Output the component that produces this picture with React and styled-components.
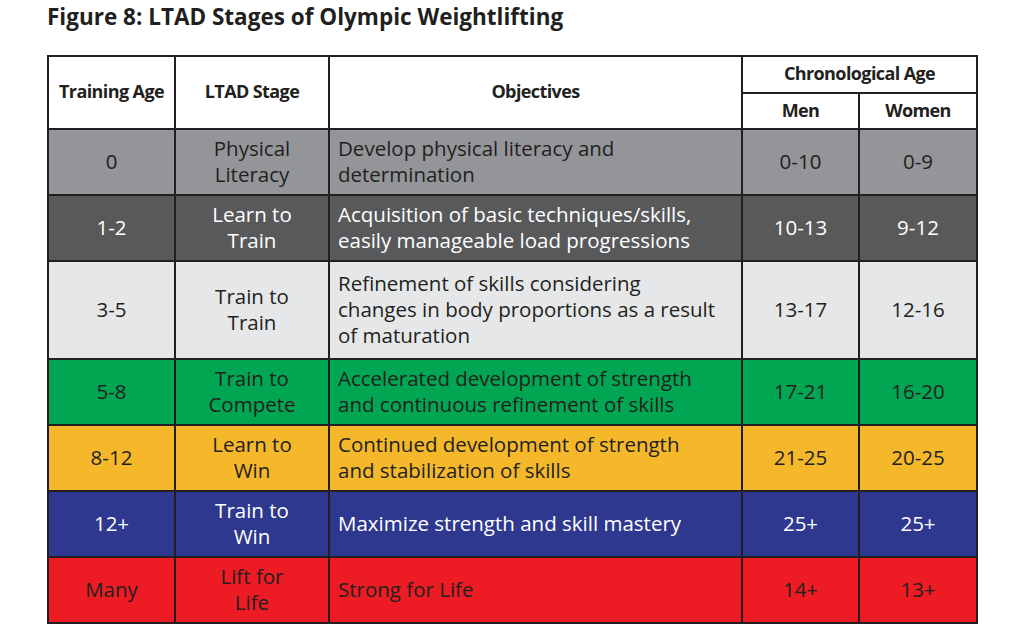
import React from "react";
import styled, { createGlobalStyle } from "styled-components";

const Global = createGlobalStyle`
  html, body { margin: 0; padding: 0; background: #ffffff; }
  body { font-family: "Open Sans", "Noto Sans", sans-serif; color: #231f20; }
`;

const Page = styled.div`
  width: 1024px;
  height: 626px;
  padding: 2px 0 0 47px;
  box-sizing: border-box;
  overflow: hidden;
`;

const Title = styled.h1`
  margin: 0 0 23px 0;
  font-family: "Open Sans", sans-serif;
  font-weight: 700;
  font-size: 22.5px;
  letter-spacing: 0;
  line-height: 30px;
  color: #231f20;
`;

const Grid = styled.div`
  display: grid;
  width: 931px;
  box-sizing: border-box;
  grid-template-columns: 125px 152px 411px 115px 116px;
  grid-template-rows: 35px 34px 64px 64px 96px 64px 64px 64px 64px;
  gap: 2px;
  padding: 2px;
  background: #231f20;
`;

const HeadCell = styled.div`
  background: #ffffff;
  display: flex;
  align-items: center;
  justify-content: center;
  padding-bottom: 3px;
  font-weight: 700;
  font-size: 18px;
  letter-spacing: -0.6px;
  color: #231f20;
  grid-row: ${(p) => (p.$tall ? "span 2" : "auto")};
  grid-column: ${(p) => (p.$wide ? "span 2" : "auto")};
`;

const Cell = styled.div`
  background: ${(p) => p.$bg};
  color: ${(p) => p.$fg};
  display: flex;
  align-items: center;
  justify-content: ${(p) => (p.$left ? "flex-start" : "center")};
  text-align: ${(p) => (p.$left ? "left" : "center")};
  padding: ${(p) => (p.$left ? "0 4px 2px 8px" : "0 4px 2px")};
  font-size: 20.5px;
  letter-spacing: 0;
  line-height: 26px;
  white-space: nowrap;
`;

const rows = [
  { bg: "#939598", fg: "#231f20", age: "0", stage: ["Physical", "Literacy"], obj: ["Develop physical literacy and", "determination"], men: "0-10", women: "0-9" },
  { bg: "#58595b", fg: "#ffffff", age: "1-2", stage: ["Learn to", "Train"], obj: ["Acquisition of basic techniques/skills,", "easily manageable load progressions"], men: "10-13", women: "9-12" },
  { bg: "#e6e7e8", fg: "#231f20", age: "3-5", stage: ["Train to", "Train"], obj: ["Refinement of skills considering", "changes in body proportions as a result", "of maturation"], men: "13-17", women: "12-16" },
  { bg: "#00a651", fg: "#231f20", age: "5-8", stage: ["Train to", "Compete"], obj: ["Accelerated development of strength", "and continuous refinement of skills"], men: "17-21", women: "16-20" },
  { bg: "#f4b82a", fg: "#231f20", age: "8-12", stage: ["Learn to", "Win"], obj: ["Continued development of strength", "and stabilization of skills"], men: "21-25", women: "20-25" },
  { bg: "#2e388e", fg: "#ffffff", age: "12+", stage: ["Train to", "Win"], obj: ["Maximize strength and skill mastery"], men: "25+", women: "25+" },
  { bg: "#ed1c24", fg: "#231f20", age: "Many", stage: ["Lift for", "Life"], obj: ["Strong for Life"], men: "14+", women: "13+" },
];

const Lines = ({ items }) => (
  <span>
    {items.map((t, i) => (
      <React.Fragment key={i}>
        {i > 0 && <br />}
        {t}
      </React.Fragment>
    ))}
  </span>
);

export default function App() {
  return (
    <>
      <Global />
      <Page>
        <Title>Figure 8: LTAD Stages of Olympic Weightlifting</Title>
        <Grid>
          <HeadCell $tall>Training Age</HeadCell>
          <HeadCell $tall>LTAD Stage</HeadCell>
          <HeadCell $tall>Objectives</HeadCell>
          <HeadCell $wide>Chronological Age</HeadCell>
          <HeadCell>Men</HeadCell>
          <HeadCell>Women</HeadCell>
          {rows.map((r, i) => (
            <React.Fragment key={i}>
              <Cell $bg={r.bg} $fg={r.fg}>{r.age}</Cell>
              <Cell $bg={r.bg} $fg={r.fg}><Lines items={r.stage} /></Cell>
              <Cell $bg={r.bg} $fg={r.fg} $left><Lines items={r.obj} /></Cell>
              <Cell $bg={r.bg} $fg={r.fg}>{r.men}</Cell>
              <Cell $bg={r.bg} $fg={r.fg}>{r.women}</Cell>
            </React.Fragment>
          ))}
        </Grid>
      </Page>
    </>
  );
}
